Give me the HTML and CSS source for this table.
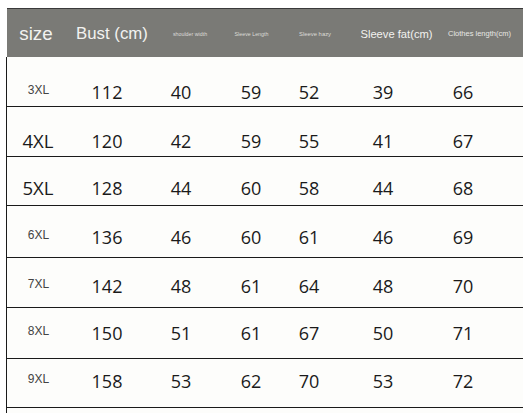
FILE: index.html
```html
<!DOCTYPE html>
<html>
<head>
<meta charset="utf-8">
<link rel="stylesheet" href="styles.css">
</head>
<body>
<div class="chart">
  <div class="head">
    <div class="h h1 big">size</div>
    <div class="h h2 mid">Bust (cm)</div>
    <div class="h h3 tiny">shoulder width</div>
    <div class="h h4 tiny">Sleeve Length</div>
    <div class="h h5 tiny2">Sleeve hazy</div>
    <div class="h h6 fat">Sleeve fat(cm)</div>
    <div class="h h7 small">Clothes length(cm)</div>
  </div>
  <div class="row r1"><div class="c lbl">3XL</div><div class="c">112</div><div class="c">40</div><div class="c">59</div><div class="c">52</div><div class="c">39</div><div class="c">66</div></div>
  <div class="row r2"><div class="c lbl-big">4XL</div><div class="c">120</div><div class="c">42</div><div class="c">59</div><div class="c">55</div><div class="c">41</div><div class="c">67</div></div>
  <div class="row r3"><div class="c lbl-big">5XL</div><div class="c">128</div><div class="c">44</div><div class="c">60</div><div class="c">58</div><div class="c">44</div><div class="c">68</div></div>
  <div class="row r4"><div class="c lbl">6XL</div><div class="c">136</div><div class="c">46</div><div class="c">60</div><div class="c">61</div><div class="c">46</div><div class="c">69</div></div>
  <div class="row r5"><div class="c lbl">7XL</div><div class="c">142</div><div class="c">48</div><div class="c">61</div><div class="c">64</div><div class="c">48</div><div class="c">70</div></div>
  <div class="row r6"><div class="c lbl">8XL</div><div class="c">150</div><div class="c">51</div><div class="c">61</div><div class="c">67</div><div class="c">50</div><div class="c">71</div></div>
  <div class="row r7"><div class="c lbl">9XL</div><div class="c">158</div><div class="c">53</div><div class="c">62</div><div class="c">70</div><div class="c">53</div><div class="c">72</div></div>
  <div class="row r8"></div>
</div>
</body>
</html>
```
FILE: styles.css
```css
html, body {
  margin: 0;
  padding: 0;
  background: #ffffff;
}
body {
  width: 523px;
  height: 413px;
  overflow: hidden;
}
.chart {
  padding-top: 8px;
  margin-left: 6px;
}
.head {
  margin-left: 1px;
  height: 48px;
  border-top: 1px solid #3a3a3a;
  background: #7a7a76;
  display: grid;
  grid-template-columns: 58px 94px 62px 61px 66px 97px 69px 1fr;
  align-items: center;
  color: #f2f2f0;
  font-family: "Liberation Sans", Arial, sans-serif;
}
.h {
  text-align: center;
  white-space: nowrap;
  padding-top: 1px;
}
.big { font-size: 18.8px; }
.mid { font-size: 16.8px; }
.tiny { font-size: 5.3px; color: #dcdcd8; }
.tiny2 { font-size: 5.9px; color: #dcdcd8; }
.fat { font-size: 11.2px; }
.small { font-size: 7.5px; color: #e8e8e4; }

.row {
  border-left: 1px solid #1a1a1a;
  border-bottom: 1px solid #1a1a1a;
  background: #fdfdfb;
  display: grid;
  grid-template-columns: 62px 76px 72px 68px 48px 100px 60px 1fr;
  align-items: start;
  box-sizing: border-box;
  font-family: "Open Sans", "Noto Sans", sans-serif;
  font-size: 18px;
  line-height: 24px;
  color: #1a1a1a;
}
.c {
  text-align: center;
  white-space: nowrap;
}
.lbl {
  font-family: "Liberation Sans", Arial, sans-serif;
  font-size: 12px;
  line-height: 20px;
  color: #444444;
  padding-left: 1px;
}
.lbl-big {
  font-size: 18.6px;
}
.r1 { height: 50px; padding-top: 23px; }
.r2 { height: 50px; padding-top: 22px; }
.r3 { height: 49px; padding-top: 19px; }
.r4 { height: 52px; padding-top: 19px; }
.r5 { height: 50px; padding-top: 16px; }
.r6 { height: 51px; padding-top: 13px; }
.r7 { height: 49px; padding-top: 10px; }
.r8 { height: 10px; border-bottom: none; }
```
